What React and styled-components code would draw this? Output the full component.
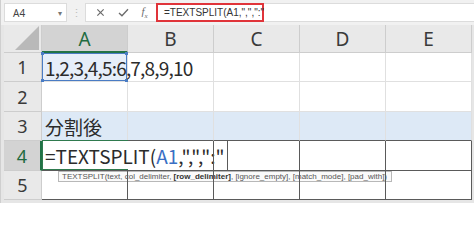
import React from "react";
import styled, { createGlobalStyle } from "styled-components";

const Global = createGlobalStyle`
  html, body { margin: 0; padding: 0; background: #fff; }
  body { width: 474px; height: 203px; overflow: hidden; }
`;

const COLS = ["A", "B", "C", "D", "E"];
const CELL_FONT = `"Noto Sans CJK JP", "Noto Sans", sans-serif`;
const UI_FONT = `"Noto Sans", "Liberation Sans", sans-serif`;

export default function App() {
  return (
    <Window>
      <Global />
      <Toolbar>
        <NameBox>
          <span>A4</span>
          <Caret>▾</Caret>
        </NameBox>
        <Dots>⋮</Dots>
        <FormulaBar>
          <Buttons>
            <IconBtn>
              <svg width="9" height="9" viewBox="0 0 10 10">
                <path d="M1.5 1.5 L8.5 8.5 M8.5 1.5 L1.5 8.5" stroke="#6b6b6b" strokeWidth="1.3" fill="none" />
              </svg>
            </IconBtn>
            <IconBtn>
              <svg width="11" height="9" viewBox="0 0 12 10">
                <path d="M1 5.5 L4.3 8.6 L11 1.4" stroke="#6b6b6b" strokeWidth="1.5" fill="none" />
              </svg>
            </IconBtn>
            <Fx>
              <i>f</i>
              <sub>x</sub>
            </Fx>
          </Buttons>
          <FormulaInput>
            <FormulaText>=TEXTSPLIT(A1,",",":"</FormulaText>
          </FormulaInput>
        </FormulaBar>
      </Toolbar>

      <Sheet>
        <Corner>
          <svg width="24" height="24" viewBox="0 0 24 24">
            <polygon points="24,0 24,24 0,24" fill="#b9b9b9" />
          </svg>
        </Corner>
        {COLS.map((c) => (
          <ColHead key={c} $active={c === "A"}>
            {c}
          </ColHead>
        ))}

        <RowHead>1</RowHead>
        <Cell $ref>
          <Overflow $tight>1,2,3,4,5:6,7,8,9,10</Overflow>
          <Handle $pos="tl" />
          <Handle $pos="tr" />
          <Handle $pos="bl" />
          <Handle $pos="br" />
        </Cell>
        <Cell />
        <Cell />
        <Cell />
        <Cell />

        <RowHead>2</RowHead>
        {COLS.map((c) => (
          <Cell key={c} />
        ))}

        <RowHead>3</RowHead>
        {COLS.map((c, i) => (
          <Cell key={c} $fill="#dde9f6" $bottom="#5a5a5a">
            {i === 0 && <Overflow>分割後</Overflow>}
          </Cell>
        ))}

        <RowHead $active>4</RowHead>
        <Cell $boxed>
          <Editor>
            <Overflow>
              =TEXTSPLIT(<Ref>A1</Ref>,",",":"
            </Overflow>
          </Editor>
          <Tip>
            TEXTSPLIT(text, col_delimiter, <b>[row_delimiter]</b>, [ignore_empty],
            [match_mode], [pad_with])
          </Tip>
        </Cell>
        {COLS.slice(1).map((c) => (
          <Cell key={c} $boxed />
        ))}

        <RowHead>5</RowHead>
        {COLS.map((c) => (
          <Cell key={c} $boxed />
        ))}
      </Sheet>
    </Window>
  );
}

const Window = styled.div`
  width: 474px;
  height: 203px;
  box-sizing: border-box;
  padding: 0 0 0 3px;
  background: #e6e6e6;
  border-left: 1px solid #cfcfcf;
  overflow: hidden;
  font-family: ${UI_FONT};
`;

const Toolbar = styled.div`
  height: 25px;
  box-sizing: border-box;
  padding-top: 3px;
  display: flex;
  align-items: flex-start;
  background: #f1f1f1;
  margin-left: -3px;
  padding-left: 3px;
`;

const NameBox = styled.div`
  width: 63px;
  height: 19px;
  box-sizing: border-box;
  background: #fff;
  border: 1px solid #dcdcdc;
  display: flex;
  align-items: center;
  justify-content: space-between;
  padding: 0 4px 0 8px;
  font-size: 10px;
  color: #444;
`;

const Caret = styled.span`
  font-size: 8px;
  color: #777;
`;

const Dots = styled.div`
  width: 18px;
  text-align: center;
  color: #bdbdbd;
  font-size: 11px;
  line-height: 19px;
`;

const FormulaBar = styled.div`
  flex: 1;
  height: 19px;
  display: flex;
  align-items: stretch;
  background: #fff;
  border: 1px solid #dcdcdc;
  border-right: none;
  box-sizing: border-box;
`;

const Buttons = styled.div`
  width: 64px;
  display: flex;
  align-items: center;
  justify-content: space-around;
  padding: 0 2px 0 4px;
`;

const IconBtn = styled.span`
  display: flex;
  align-items: center;
`;

const Fx = styled.span`
  font-family: "Liberation Serif", serif;
  color: #6b6b6b;
  font-size: 11px;
  i { font-style: italic; }
  sub { font-size: 7px; font-style: italic; }
`;

const FormulaInput = styled.div`
  width: 108px;
  margin: -1px 0;
  border: 2px solid #e0343a;
  box-sizing: border-box;
  display: flex;
  align-items: center;
  padding-left: 6px;
`;

const FormulaText = styled.span`
  font-family: "Liberation Sans", Arial, sans-serif;
  font-size: 10px;
  color: #333;
  white-space: nowrap;
`;

const Sheet = styled.div`
  display: grid;
  grid-template-columns: 38px repeat(5, 86px);
  grid-template-rows: 28px 29px 30px 29px 30px 29px;
  background: #fff;
  width: 468px;
`;

const Corner = styled.div`
  background: #e9e9e9;
  border-right: 1px solid #cdcdcd;
  border-bottom: 1px solid #cdcdcd;
  display: flex;
  align-items: flex-end;
  justify-content: flex-end;
  padding: 0 2px 2px 0;
`;

const ColHead = styled.div`
  background: ${({ $active }) => ($active ? "#d3d3d3" : "#e9e9e9")};
  border-right: 1px solid #cdcdcd;
  border-bottom: ${({ $active }) => ($active ? "2px solid #217346" : "1px solid #cdcdcd")};
  color: ${({ $active }) => ($active ? "#1f6b41" : "#3a3a3a")};
  display: flex;
  align-items: center;
  justify-content: center;
  font-size: 19px;
  padding-top: 1px;
`;

const RowHead = styled.div`
  background: ${({ $active }) => ($active ? "#d3d3d3" : "#e9e9e9")};
  border-right: ${({ $active }) => ($active ? "2px solid #217346" : "1px solid #cdcdcd")};
  border-bottom: 1px solid #cdcdcd;
  color: ${({ $active }) => ($active ? "#1f6b41" : "#3a3a3a")};
  display: flex;
  align-items: center;
  justify-content: center;
  font-size: 18px;
`;

const Cell = styled.div`
  position: relative;
  box-sizing: border-box;
  background: ${({ $fill, $ref }) => $fill || ($ref ? "#e6eef9" : "transparent")};
  border-right: 1px solid ${({ $boxed }) => ($boxed ? "#5a5a5a" : "#e0e0e0")};
  border-bottom: 1px solid
    ${({ $boxed, $bottom }) => $bottom || ($boxed ? "#5a5a5a" : "#e0e0e0")};
  box-shadow: ${({ $ref }) => ($ref ? "inset 0 0 0 1px #4a7cc4" : "none")};
  font-family: ${CELL_FONT};
  font-size: 19px;
  color: #2b2b2b;
  display: flex;
  align-items: center;
  z-index: ${({ $boxed }) => ($boxed ? 2 : 1)};
`;

const Overflow = styled.span`
  padding-left: 3px;
  white-space: nowrap;
  position: relative;
  z-index: 2;
  letter-spacing: ${({ $tight }) => ($tight ? "-0.8px" : "0")};
`;

const Handle = styled.i`
  position: absolute;
  width: 3px;
  height: 3px;
  background: #4a7cc4;
  ${({ $pos }) => ($pos[0] === "t" ? "top: -1px;" : "bottom: -1px;")}
  ${({ $pos }) => ($pos[1] === "l" ? "left: -1px;" : "right: -1px;")}
`;

const Editor = styled.div`
  position: absolute;
  left: 0;
  top: 0;
  width: 185px;
  height: 29px;
  background: #fff;
  border-right: 1px solid #5a5a5a;
  display: flex;
  align-items: center;
  z-index: 3;
  &::before {
    content: "";
    position: absolute;
    left: 0;
    top: -1px;
    width: 86px;
    height: 30px;
    border: 1.5px solid #2f7a4e;
    border-right: none;
    box-sizing: border-box;
  }
`;

const Ref = styled.span`
  color: #3a6fc4;
`;

const Tip = styled.div`
  position: absolute;
  left: 16px;
  top: 30px;
  width: max-content;
  height: 11px;
  box-sizing: border-box;
  background: #fafafa;
  border: 1px solid #b8b8b8;
  font-family: "Liberation Sans", Arial, sans-serif;
  font-size: 8px;
  line-height: 9px;
  color: #555;
  padding: 0 4px 0 3px;
  white-space: nowrap;
  z-index: 4;
  b { color: #333; }
`;
